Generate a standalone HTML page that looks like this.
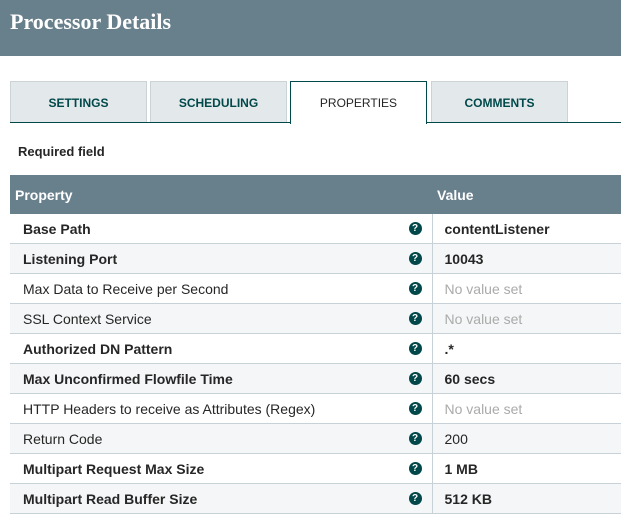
<!DOCTYPE html>
<html><head><style>
body{margin:0;width:621px;height:521px;background:#fff;font-family:"Liberation Sans",sans-serif;overflow:hidden;position:relative}
.hdr{position:absolute;left:0;top:0;width:621px;height:56px;background:#687f8c;color:#fff;font-family:"Liberation Serif",serif;font-weight:bold;font-size:22px;line-height:44px;padding-left:10px;box-sizing:border-box}
.tab{position:absolute;top:81px;height:42px;width:137px;background:#e3e8eb;border:1px solid #cbd3d7;box-sizing:border-box;font-size:12px;font-weight:bold;color:#004849;text-align:center;line-height:42px}
.tab.act{background:#fff;border:1px solid #004849;border-bottom:none;color:#262626;font-weight:normal;height:43px;z-index:2}
.line{position:absolute;left:10px;top:122px;width:611px;height:1px;background:#004849}
.req{position:absolute;left:18px;top:144px;font-size:13px;font-weight:bold;color:#262626}
table{position:absolute;left:10px;top:175px;width:611px;border-collapse:collapse;font-size:14px;color:#262626}
th{background:#687f8c;color:#fff;text-align:left;height:39px;padding:0 0 0 5px;font-size:14px}
td{height:29px;border-bottom:1px solid #c7d2d7;padding:0 0 0 13px;position:relative}
td.v{border-left:1px solid #c7d2d7;padding-left:12px}
tr:nth-child(odd) td{background:#f4f6f7}
.b{font-weight:bold}
.n{color:#aaa}
.q{position:absolute;right:10px;top:8px;width:13px;height:13px;border-radius:50%;background:#004849;color:#fff;font-size:10px;font-weight:bold;line-height:13px;text-align:center}
</style></head><body>
<div class="hdr">Processor Details</div>
<div class="tab" style="left:10px">SETTINGS</div>
<div class="tab" style="left:150px">SCHEDULING</div>
<div class="tab act" style="left:290px">PROPERTIES</div>
<div class="tab" style="left:431px">COMMENTS</div>
<div class="line"></div>
<div class="req">Required field</div>
<table>
<tr><th style="width:417px">Property</th><th>Value</th></tr>
<tr><td class="b">Base Path<span class="q">?</span></td><td class="v b">contentListener</td></tr>
<tr><td class="b">Listening Port<span class="q">?</span></td><td class="v b">10043</td></tr>
<tr><td>Max Data to Receive per Second<span class="q">?</span></td><td class="v n">No value set</td></tr>
<tr><td>SSL Context Service<span class="q">?</span></td><td class="v n">No value set</td></tr>
<tr><td class="b">Authorized DN Pattern<span class="q">?</span></td><td class="v b">.*</td></tr>
<tr><td class="b">Max Unconfirmed Flowfile Time<span class="q">?</span></td><td class="v b">60 secs</td></tr>
<tr><td>HTTP Headers to receive as Attributes (Regex)<span class="q">?</span></td><td class="v n">No value set</td></tr>
<tr><td>Return Code<span class="q">?</span></td><td class="v">200</td></tr>
<tr><td class="b">Multipart Request Max Size<span class="q">?</span></td><td class="v b">1 MB</td></tr>
<tr><td class="b">Multipart Read Buffer Size<span class="q">?</span></td><td class="v b">512 KB</td></tr>
</table>
</body></html>
